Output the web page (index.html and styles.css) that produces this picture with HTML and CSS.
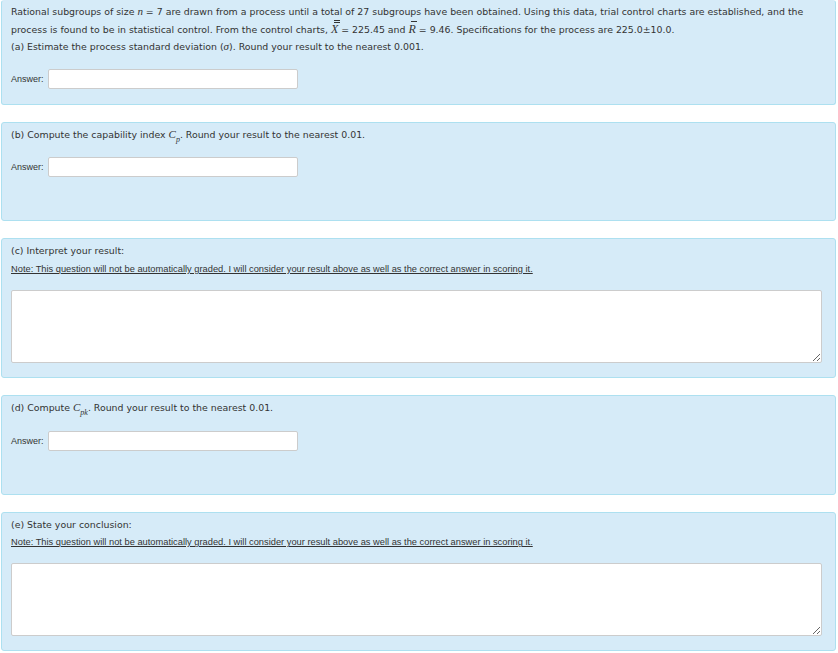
FILE: index.html
```html
<!DOCTYPE html>
<html>
<head>
<meta charset="utf-8">
<link rel="stylesheet" href="styles.css">
</head>
<body>
<div class="page">
  <div class="box box-a">
    <p class="q">Rational subgroups of size <i class="m">n</i> = 7 are drawn from a process until a total of 27 subgroups have been obtained. Using this data, trial control charts are established, and the process is found to be in statistical control. From the control charts, <span class="xbb"><i class="mx">X</i></span> = 225.45 and <span class="rb"><i class="mx">R</i></span> = 9.46. Specifications for the process are 225.0±10.0.</p>
    <p class="q">(a) Estimate the process standard deviation (<i class="m">σ</i>). Round your result to the nearest 0.001.</p>
    <div class="answer answer-a"><span class="lbl">Answer:</span><input class="inp" type="text"></div>
  </div>

  <div class="box box-s">
    <p class="q">(b) Compute the capability index <i class="m">C</i><sub class="sb">p</sub>. Round your result to the nearest 0.01.</p>
    <div class="answer"><span class="lbl">Answer:</span><input class="inp" type="text"></div>
  </div>

  <div class="box box-t">
    <p class="q">(c) Interpret your result:</p>
    <p class="note">Note: This question will not be automatically graded. I will consider your result above as well as the correct answer in scoring it.</p>
    <textarea class="ta"></textarea>
  </div>

  <div class="box box-s">
    <p class="q">(d) Compute <i class="m">C</i><sub class="sb">pk</sub>. Round your result to the nearest 0.01.</p>
    <div class="answer"><span class="lbl">Answer:</span><input class="inp" type="text"></div>
  </div>

  <div class="box box-t">
    <p class="q">(e) State your conclusion:</p>
    <p class="note">Note: This question will not be automatically graded. I will consider your result above as well as the correct answer in scoring it.</p>
    <textarea class="ta"></textarea>
  </div>
</div>
</body>
</html>
```

FILE: styles.css
```css
html, body {
  margin: 0;
  padding: 0;
  background: #ffffff;
}
.page {
  padding: 0 2px 0 1px;
  display: flex;
  flex-direction: column;
  gap: 17px;
}
.box {
  background: #d6ebf8;
  border: 1px solid #ade0f0;
  border-radius: 3px;
  padding: 3px 9px 0 9px;
  color: #333333;
}
.box-a { padding-top: 2px; padding-bottom: 15px; border-top-color: #d6ebf8; }
.box-s { padding-bottom: 43px; }
.box-t { padding-bottom: 14px; }
.q {
  margin: 0;
  font-family: "DejaVu Sans", Verdana, sans-serif;
  font-size: 9.4px;
  line-height: 17.6px;
}
.m {
  font-family: "Liberation Serif", "DejaVu Serif", serif;
  font-size: 11px;
  line-height: 1;
}
.mx {
  font-family: "Liberation Serif", "DejaVu Serif", serif;
  font-size: 12px;
  line-height: 1;
}
.xbb, .rb {
  position: relative;
  display: inline-block;
  line-height: 10px;
}
.xbb::before, .xbb::after, .rb::before {
  content: "";
  position: absolute;
  left: 3px;
  width: 6px;
  border-top: 1px solid #333;
}
.xbb::before { top: -3px; }
.xbb::after { top: -1px; }
.rb::before { top: -2px; }
.sb {
  font-family: "Liberation Serif", "DejaVu Serif", serif;
  font-style: italic;
  font-size: 8px;
  vertical-align: -4px;
  line-height: 0;
}
.answer {
  display: flex;
  align-items: center;
  gap: 4px;
  margin-top: 14px;
}
.answer-a { margin-top: 13px; }
.lbl {
  font-family: "Liberation Sans", Arial, sans-serif;
  font-size: 9px;
  color: #333;
}
.inp {
  width: 250px;
  height: 20px;
  box-sizing: border-box;
  border: 1px solid #cccccc;
  border-radius: 2px;
  background: #ffffff;
  margin: 0;
  padding: 0 4px;
}
.note {
  margin: 0;
  font-family: "Liberation Sans", Arial, sans-serif;
  font-size: 9.3px;
  line-height: 18px;
  text-decoration: underline;
  color: #333;
}
.ta {
  display: block;
  width: 811px;
  height: 73px;
  box-sizing: border-box;
  margin: 12px 0 0 0;
  border: 1px solid #cccccc;
  border-radius: 2px;
  background: #ffffff;
  resize: both;
}
```
